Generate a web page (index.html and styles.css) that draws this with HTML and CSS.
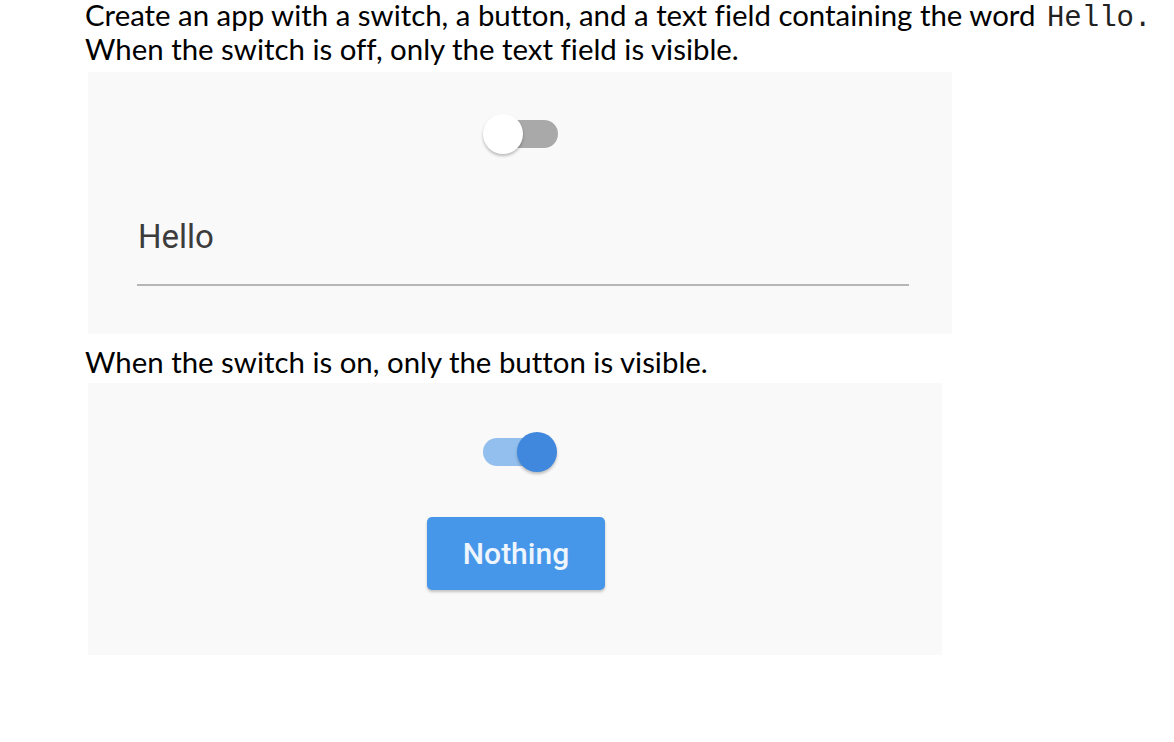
FILE: index.html
```html
<!DOCTYPE html>
<html>
<head>
<meta charset="utf-8">
<link rel="stylesheet" href="styles.css">
</head>
<body>
<div class="doc">
  <p class="line line-1">Create an app with a switch, a button, and a text field containing the word <span class="mono">Hello.</span></p>
  <p class="line">When the switch is off, only the text field is visible.</p>
  <div class="panel panel-off">
    <div class="switch switch-off"><span class="thumb"></span></div>
    <div class="field">
      <div class="field-text">Hello</div>
      <div class="field-line"></div>
    </div>
  </div>
  <p class="line line-3">When the switch is on, only the button is visible.</p>
  <div class="panel panel-on">
    <div class="switch switch-on"><span class="thumb"></span></div>
    <div class="btn">Nothing</div>
  </div>
</div>
</body>
</html>
```
FILE: styles.css
```css
html, body {
  margin: 0;
  padding: 0;
  background: #ffffff;
}
.doc {
  padding: 0 0 0 85px;
  font-family: Lato, "Liberation Sans", sans-serif;
  color: #000;
}
.line {
  margin: 0;
  font-size: 29.4px;
  line-height: 36px;
  height: 36px;
  white-space: nowrap;
  font-variant-ligatures: none;
}
.line-1 {
  padding-top: 1px;
  line-height: 28px;
  height: 30px;
}
.mono {
  font-family: "Liberation Mono", "Courier New", monospace;
  font-size: 29px;
  line-height: 28px;
  margin-left: 4px;
  color: #222;
}
.panel {
  margin-left: 3px;
  background: #f9f9f9;
  display: flex;
  flex-direction: column;
  align-items: center;
  box-sizing: border-box;
}
.panel-off {
  width: 864px;
  height: 262px;
  margin-top: 5px;
  padding-top: 48px;
}
.panel-on {
  width: 854px;
  height: 272px;
  margin-top: 3px;
  padding-top: 55px;
}
.line-3 {
  margin-top: 10px;
}
.switch {
  position: relative;
  width: 72px;
  height: 28px;
  border-radius: 14px;
}
.switch-off {
  background: #a9a9a9;
  margin-left: 4px;
}
.switch-on {
  background: #93bfee;
  margin-left: 8px;
}
.thumb {
  position: absolute;
  top: -6px;
  width: 40px;
  height: 40px;
  border-radius: 50%;
  box-shadow: 0 2px 3px rgba(0, 0, 0, 0.25);
}
.switch-off .thumb {
  left: -3px;
  background: #ffffff;
}
.switch-on .thumb {
  left: 34px;
  background: #3f88dd;
}
.field {
  align-self: stretch;
  margin: 0 43px 0 49px;
  padding-top: 70px;
}
.field-text {
  padding-left: 1px;
  font-family: Roboto, "Liberation Sans", sans-serif;
  font-size: 33px;
  line-height: 38px;
  color: #3c3c3c;
}
.field-line {
  margin-top: 28px;
  height: 2px;
  background: #b6b6b6;
}
.btn {
  margin-top: 51px;
  margin-left: 2px;
  width: 178px;
  height: 73px;
  border-radius: 5px;
  background: #4697e9;
  box-shadow: 0 2px 3px rgba(0, 0, 0, 0.22);
  display: flex;
  align-items: center;
  justify-content: center;
  font-family: Roboto, "Liberation Sans", sans-serif;
  font-weight: 500;
  font-size: 30px;
  color: #eef5fd;
}
```
